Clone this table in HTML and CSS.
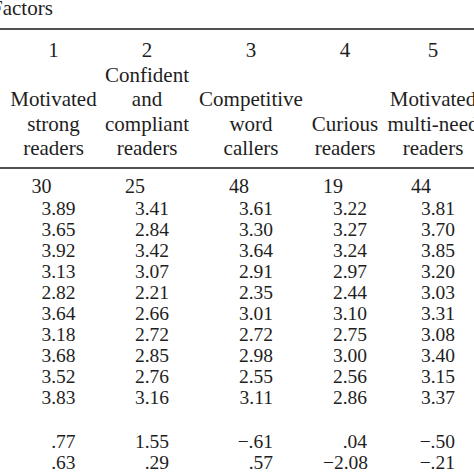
FILE: index.html
```html
<!DOCTYPE html>
<html>
<head>
<meta charset="utf-8">
<link rel="stylesheet" href="styles.css">
</head>
<body>
<div class="caption">Factors</div>
<table class="factors">
  <colgroup>
    <col class="c1"><col class="c2"><col class="c3"><col class="c4"><col class="c5">
  </colgroup>
  <thead>
    <tr class="nums"><th>1</th><th>2</th><th>3</th><th>4</th><th>5</th></tr>
    <tr class="names">
      <th>Motivated<br>strong<br>readers</th>
      <th>Confident<br>and<br>compliant<br>readers</th>
      <th>Competitive<br>word<br>callers</th>
      <th>Curious<br>readers</th>
      <th>Motivated<br>multi-need<br>readers</th>
    </tr>
  </thead>
  <tbody>
    <tr class="n"><td><span class="v">30</span></td><td><span class="v">25</span></td><td><span class="v">48</span></td><td><span class="v">19</span></td><td><span class="v">44</span></td></tr>
    <tr><td><span class="v">3.89</span></td><td><span class="v">3.41</span></td><td><span class="v">3.61</span></td><td><span class="v">3.22</span></td><td><span class="v">3.81</span></td></tr>
    <tr><td><span class="v">3.65</span></td><td><span class="v">2.84</span></td><td><span class="v">3.30</span></td><td><span class="v">3.27</span></td><td><span class="v">3.70</span></td></tr>
    <tr><td><span class="v">3.92</span></td><td><span class="v">3.42</span></td><td><span class="v">3.64</span></td><td><span class="v">3.24</span></td><td><span class="v">3.85</span></td></tr>
    <tr><td><span class="v">3.13</span></td><td><span class="v">3.07</span></td><td><span class="v">2.91</span></td><td><span class="v">2.97</span></td><td><span class="v">3.20</span></td></tr>
    <tr><td><span class="v">2.82</span></td><td><span class="v">2.21</span></td><td><span class="v">2.35</span></td><td><span class="v">2.44</span></td><td><span class="v">3.03</span></td></tr>
    <tr><td><span class="v">3.64</span></td><td><span class="v">2.66</span></td><td><span class="v">3.01</span></td><td><span class="v">3.10</span></td><td><span class="v">3.31</span></td></tr>
    <tr><td><span class="v">3.18</span></td><td><span class="v">2.72</span></td><td><span class="v">2.72</span></td><td><span class="v">2.75</span></td><td><span class="v">3.08</span></td></tr>
    <tr><td><span class="v">3.68</span></td><td><span class="v">2.85</span></td><td><span class="v">2.98</span></td><td><span class="v">3.00</span></td><td><span class="v">3.40</span></td></tr>
    <tr><td><span class="v">3.52</span></td><td><span class="v">2.76</span></td><td><span class="v">2.55</span></td><td><span class="v">2.56</span></td><td><span class="v">3.15</span></td></tr>
    <tr><td><span class="v">3.83</span></td><td><span class="v">3.16</span></td><td><span class="v">3.11</span></td><td><span class="v">2.86</span></td><td><span class="v">3.37</span></td></tr>
    <tr class="gap"><td></td><td></td><td></td><td></td><td></td></tr>
    <tr><td><span class="v">.77</span></td><td><span class="v">1.55</span></td><td><span class="v">&minus;.61</span></td><td><span class="v">.04</span></td><td><span class="v">&minus;.50</span></td></tr>
    <tr><td><span class="v">.63</span></td><td><span class="v">.29</span></td><td><span class="v">.57</span></td><td><span class="v">&minus;2.08</span></td><td><span class="v">&minus;.21</span></td></tr>
  </tbody>
</table>
</body>
</html>
```
FILE: styles.css
```css
html, body {
  margin: 0;
  padding: 0;
  background: #ffffff;
  overflow: hidden;
}

body {
  width: 474px;
  height: 474px;
  font-family: "Liberation Serif", "Times New Roman", serif;
  color: #1e1e1e;
}

.caption {
  font-size: 21px;
  line-height: 20px;
  margin: -2px 0 10px -9px;
}

.factors {
  border-collapse: collapse;
  table-layout: fixed;
  width: 484px;
  border-top: 2px solid #505050;
}

.c1 { width: 100px; }
.c2 { width: 94px; }
.c3 { width: 114px; }
.c4 { width: 74px; }
.c5 { width: 102px; }

.factors th {
  font-weight: normal;
  padding: 0;
  font-size: 21px;
  line-height: 24.5px;
  text-align: center;
  white-space: nowrap;
}

.factors th:first-child,
.factors td:first-child {
  padding-left: 7px;
}

.nums th {
  padding-top: 8px;
}

.names th {
  vertical-align: bottom;
  padding-bottom: 6.5px;
  border-bottom: 2px solid #505050;
}

.factors td {
  padding: 0;
  text-align: center;
  font-size: 19.5px;
  line-height: 21.1px;
  white-space: nowrap;
}

.v {
  display: inline-block;
  width: 44px;
  text-align: right;
}

.n .v {
  font-size: 20px;
  text-align: left;
}

.n td {
  padding-top: 6.5px;
  padding-bottom: 1px;
}

.gap td {
  height: 22px;
}
```
